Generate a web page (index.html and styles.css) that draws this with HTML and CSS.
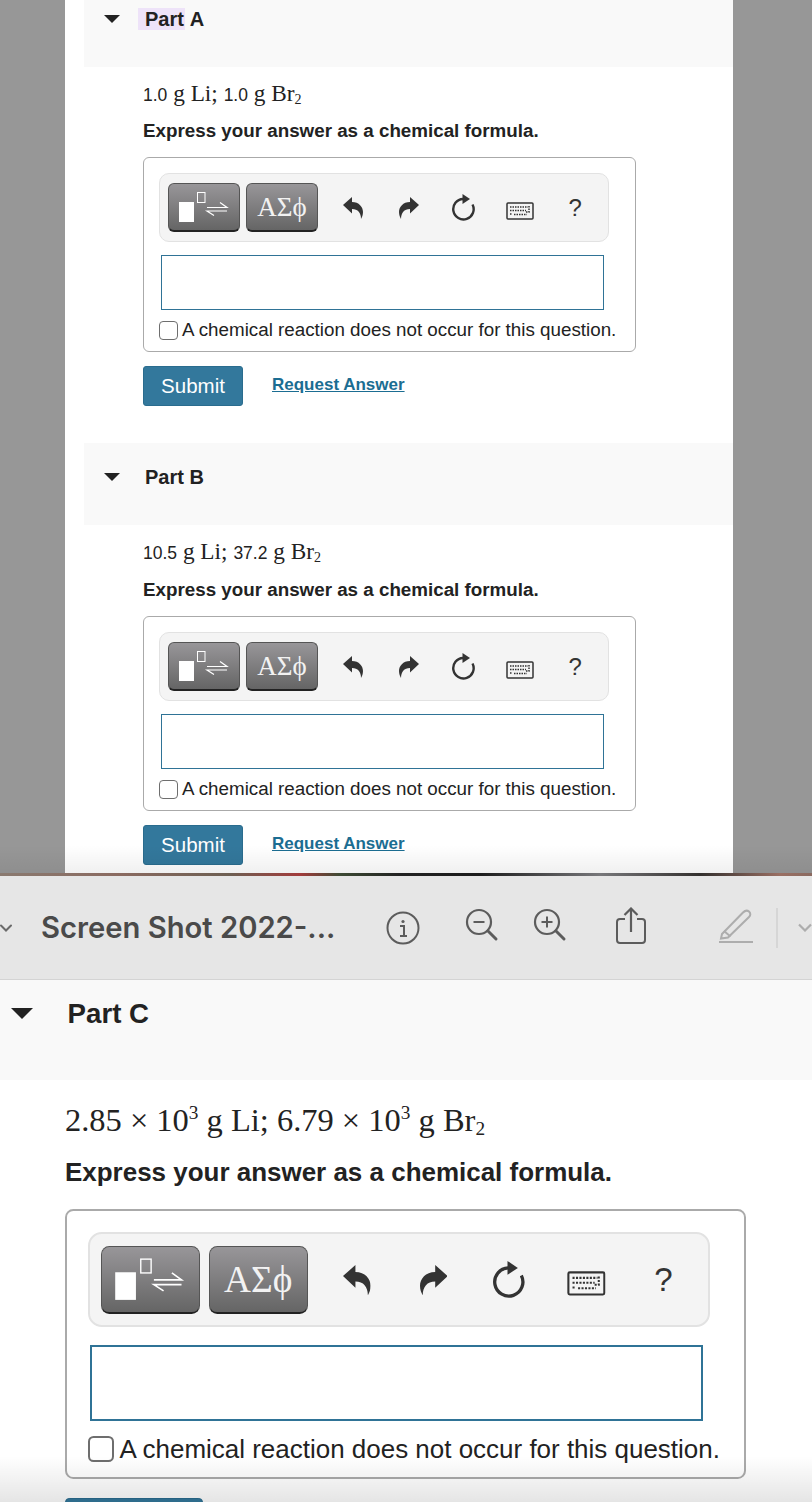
FILE: index.html
```html
<!DOCTYPE html>
<html lang="en">
<head>
  <meta charset="UTF-8">
  <title>Part A, B, C</title>
  <link rel="stylesheet" href="styles.css">
</head>
<body>
  <!-- shared toolbar icons -->
  <svg class="icon-defs" aria-hidden="true">
    <symbol id="i-template" viewBox="0 0 72 49">
      <rect x="11" y="19" width="15" height="20" fill="#fff"/>
      <rect x="29.5" y="9.5" width="7.5" height="10" fill="none" stroke="#fff"/>
      <path d="M39 24.500H59L52 19.500M59 28H39L46 32.500" fill="none" stroke="#fff" stroke-width="1.200"/>
    </symbol>
    <symbol id="i-undo" viewBox="0 0 20 22">
      <path d="M0 8 9 0V5C16 5 20 10 20 15 20 18 19 20 18 22 18 16 15 12 9 12V16.500Z" fill="#333"/>
    </symbol>
    <symbol id="i-redo" viewBox="0 0 20 22">
      <path d="M20 8 11 0V5C4 5 0 10 0 15 0 18 1 20 2 22 2 16 5 12 11 12V16.500Z" fill="#333"/>
    </symbol>
    <symbol id="i-reset" viewBox="0 0 24 27">
      <path d="M20.500 10.500A10.200 10.200 0 1 1 11 5" fill="none" stroke="#333" stroke-width="2.400"/>
      <path d="M10.500 0 18 5 10.500 10Z" fill="#333"/>
    </symbol>
    <symbol id="i-keys" viewBox="0 0 28 18">
      <rect x="1" y="1" width="26" height="16" rx="1" fill="none" stroke="#333" stroke-width="1.500"/>
      <path d="M4 5H22M4 8.500H20M4 12H6M8 12.500H21M23 4V10H20" fill="none" stroke="#333" stroke-width="1.500" stroke-dasharray="1.500 1"/>
    </symbol>
  </svg>

  <!-- first screenshot, parts A and B -->
  <div class="pane-top">
    <div class="sheet">
      <section class="part part-first">
        <div class="part-head">
          <span class="arrow"></span>
          <h2><span class="hilite">Part</span> A</h2>
        </div>
        <div class="part-body">
          <p class="amount"><span class="num">1.0</span> g Li; <span class="num">1.0</span> g Br<sub>2</sub></p>
          <p class="ask">Express your answer as a chemical formula.</p>
          <div class="answer">
            <div class="toolbar">
              <button class="tpl-btn"><svg><use href="#i-template"/></svg></button>
              <button class="tpl-btn greek">ΑΣϕ</button>
              <span class="tool"><svg class="ic-arrow"><use href="#i-undo"/></svg></span>
              <span class="tool"><svg class="ic-arrow"><use href="#i-redo"/></svg></span>
              <span class="tool"><svg class="ic-reset"><use href="#i-reset"/></svg></span>
              <span class="tool"><svg class="ic-keys"><use href="#i-keys"/></svg></span>
              <span class="tool help">?</span>
            </div>
            <div class="field"></div>
            <label class="noreact"><span class="check"></span>A chemical reaction does not occur for this question.</label>
          </div>
          <div class="actions">
            <button class="submit">Submit</button>
            <a class="request">Request Answer</a>
          </div>
        </div>
      </section>

      <section class="part">
        <div class="part-head">
          <span class="arrow"></span>
          <h2>Part B</h2>
        </div>
        <div class="part-body">
          <p class="amount"><span class="num">10.5</span> g Li; <span class="num">37.2</span> g Br<sub>2</sub></p>
          <p class="ask">Express your answer as a chemical formula.</p>
          <div class="answer">
            <div class="toolbar">
              <button class="tpl-btn"><svg><use href="#i-template"/></svg></button>
              <button class="tpl-btn greek">ΑΣϕ</button>
              <span class="tool"><svg class="ic-arrow"><use href="#i-undo"/></svg></span>
              <span class="tool"><svg class="ic-arrow"><use href="#i-redo"/></svg></span>
              <span class="tool"><svg class="ic-reset"><use href="#i-reset"/></svg></span>
              <span class="tool"><svg class="ic-keys"><use href="#i-keys"/></svg></span>
              <span class="tool help">?</span>
            </div>
            <div class="field"></div>
            <label class="noreact"><span class="check"></span>A chemical reaction does not occur for this question.</label>
          </div>
          <div class="actions">
            <button class="submit">Submit</button>
            <a class="request">Request Answer</a>
          </div>
        </div>
      </section>
    </div>
  </div>

  <div class="photo-strip"></div>

  <!-- preview window title bar -->
  <header class="viewer-bar">
    <svg class="bar-chevron" width="12" height="8" viewBox="0 0 12 8"><path d="M1 1.500 6 6.500 11 1.500" fill="none" stroke="#6a6a6a" stroke-width="2" stroke-linecap="round"/></svg>
    <div class="viewer-title">Screen Shot 2022-...</div>
    <svg class="bar-info" width="34" height="34" viewBox="0 0 34 34">
      <circle cx="17" cy="17" r="15.500" fill="none" stroke="#5c5c5c" stroke-width="2"/>
      <circle cx="17" cy="10.500" r="1.600" fill="#5c5c5c"/>
      <path d="M14 15H18V24M14 25H21" fill="none" stroke="#5c5c5c" stroke-width="2"/>
    </svg>
    <svg class="bar-zoomout" width="34" height="34" viewBox="0 0 34 34">
      <circle cx="14" cy="14" r="12" fill="none" stroke="#5c5c5c" stroke-width="2.200"/>
      <path d="M8.500 14H19.500" stroke="#5c5c5c" stroke-width="2"/>
      <path d="M23 23 31 31" stroke="#5c5c5c" stroke-width="3" stroke-linecap="round"/>
    </svg>
    <svg class="bar-zoomin" width="34" height="34" viewBox="0 0 34 34">
      <circle cx="14" cy="14" r="12" fill="none" stroke="#5c5c5c" stroke-width="2.200"/>
      <path d="M8.500 14H19.500M14 8.500V19.500" stroke="#5c5c5c" stroke-width="2"/>
      <path d="M23 23 31 31" stroke="#5c5c5c" stroke-width="3" stroke-linecap="round"/>
    </svg>
    <svg class="bar-share" width="30" height="38" viewBox="0 0 30 38">
      <path d="M9 12H4A3 3 0 0 0 1 15V33A3 3 0 0 0 4 36H26A3 3 0 0 0 29 33V15A3 3 0 0 0 26 12H21" fill="none" stroke="#5c5c5c" stroke-width="2"/>
      <path d="M15 25V2M8.500 8 15 1.500 21.500 8" fill="none" stroke="#5c5c5c" stroke-width="2.200"/>
    </svg>
    <svg class="bar-pencil" width="34" height="36" viewBox="0 0 34 36">
      <path d="M3 26 24 4.500C26 2.500 28 2 30 3.500 32 5.500 31.500 7.500 30 9L9 29.500 2 30.500Z" fill="none" stroke="#adadad" stroke-width="2"/>
      <path d="M5 23 11.500 28.500" stroke="#adadad" stroke-width="2"/>
      <path d="M0 34H34" stroke="#adadad" stroke-width="2"/>
    </svg>
    <span class="bar-divider"></span>
    <svg class="bar-chevron-r" width="14" height="9" viewBox="0 0 14 9"><path d="M1 1.500 7 7.500 13 1.500" fill="none" stroke="#adadad" stroke-width="2.200"/></svg>
  </header>

  <!-- second screenshot, part C, same page zoomed in -->
  <div class="pane-bottom">
    <div class="sheet-big">
      <section class="part">
        <div class="part-head">
          <span class="arrow"></span>
          <h2>Part C</h2>
        </div>
        <div class="part-body">
          <p class="amount serif">2.85 × 10<sup>3</sup> g Li; 6.79 × 10<sup>3</sup> g Br<sub>2</sub></p>
          <p class="ask">Express your answer as a chemical formula.</p>
          <div class="answer">
            <div class="toolbar">
              <button class="tpl-btn"><svg><use href="#i-template"/></svg></button>
              <button class="tpl-btn greek">ΑΣϕ</button>
              <span class="tool"><svg class="ic-arrow"><use href="#i-undo"/></svg></span>
              <span class="tool"><svg class="ic-arrow"><use href="#i-redo"/></svg></span>
              <span class="tool"><svg class="ic-reset"><use href="#i-reset"/></svg></span>
              <span class="tool"><svg class="ic-keys"><use href="#i-keys"/></svg></span>
              <span class="tool help">?</span>
            </div>
            <div class="field"></div>
            <label class="noreact"><span class="check"></span>A chemical reaction does not occur for this question.</label>
          </div>
          <div class="actions">
            <div class="submit"></div>
          </div>
        </div>
      </section>
    </div>
  </div>
</body>
</html>
```

FILE: styles.css
```css
body {
  margin: 0;
  padding: 0;
  width: 812px;
  height: 1502px;
  overflow: hidden;
  background-color: #fff;
  font-family: "Liberation Sans", Arial, sans-serif;
  color: #222;
}

.icon-defs {
  display: none;
}

/* panes */
.pane-top {
  position: relative;
  height: 873px;
  overflow: hidden;
  background-color: #979797;
}

.pane-top::after {
  content: "";
  position: absolute;
  left: 0;
  right: 0;
  bottom: 0;
  height: 28px;
  background: linear-gradient(rgba(0, 0, 0, 0), rgba(0, 0, 0, 0.06));
}

.sheet {
  margin-left: 65px;
  width: 649px;
  height: 900px;
  padding-left: 19px;
  background-color: #fff;
}

.photo-strip {
  height: 3px;
  background: linear-gradient(90deg, #8a7a70 0, #8a6a60 120px, #6d5f52 230px, #a23b3b 300px, #3d4a34 340px, #222 400px, #1c1c1c 480px, #77777a 600px, #33302e 700px, #9a6f63 780px, #8a6a60 812px);
}

.viewer-bar {
  position: relative;
  z-index: 1;
  display: flex;
  align-items: center;
  height: 103px;
  background-color: #e6e6e6;
  border-bottom: 1px solid #d4d4d4;
  box-sizing: content-box;
}

.viewer-title {
  margin-left: 29px;
  width: 345px;
  font-family: Inter, "Liberation Sans", sans-serif;
  font-size: 29.200px;
  font-weight: 600;
  color: #4a4a4a;
  white-space: nowrap;
}

.bar-zoomout { margin-left: 45px; margin-top: -6px; }
.bar-zoomin { margin-left: 34px; margin-top: -6px; }
.bar-share { margin-left: 49px; margin-top: -3px; }
.bar-pencil { margin-left: 73px; margin-top: -4px; }

.bar-divider {
  margin-left: 23px;
  width: 2px;
  height: 40px;
  background-color: #d6d6d6;
}

.bar-chevron-r { margin-left: 20px; }

.pane-bottom {
  position: relative;
  height: 522px;
  overflow: hidden;
}

.pane-bottom::after {
  content: "";
  position: absolute;
  left: 0;
  right: 0;
  bottom: 0;
  height: 46px;
  background: linear-gradient(rgba(0, 0, 0, 0), rgba(0, 0, 0, 0.1));
}

.sheet-big {
  zoom: 1.382;
  margin-left: -12px;
  margin-top: -9.500px;
  width: 610px;
}

/* question part */
.part {
  margin-bottom: 37px;
}

.part-first {
  margin-top: -15px;
}

.part-head {
  display: flex;
  align-items: flex-start;
  height: 82px;
  padding-left: 20px;
  background-color: #f9f9f9;
}

.arrow {
  width: 0;
  height: 0;
  margin-top: 30px;
  border-left: 8px solid transparent;
  border-right: 8px solid transparent;
  border-top: 8px solid #222;
}

.part-head h2 {
  margin: 23px 0 0 25px;
  font-size: 20px;
  line-height: 22px;
  font-weight: bold;
  color: #222;
}

.hilite {
  margin-left: -7px;
  padding: 0 1px 0 7px;
  background-color: #eee3f9;
}

.part-body {
  padding-left: 59px;
}

.amount {
  margin: 0;
  padding-top: 14px;
  font-family: "Liberation Serif", serif;
  font-size: 23.300px;
  line-height: 24px;
  color: #222;
}

.part + .part .amount {
  padding-bottom: 1px;
}

.amount.serif {
  padding-top: 17px;
  padding-bottom: 2.500px;
  font-size: 23.500px;
}

.amount .num {
  font-family: "Liberation Sans", sans-serif;
  font-size: 17.500px;
}

.amount sub {
  font-size: 14px;
  line-height: 0;
  vertical-align: -3px;
}

.amount sup {
  font-size: 14px;
  line-height: 0;
}

.ask {
  margin: 13px 0 16px;
  font-size: 18.800px;
  line-height: 21px;
  font-weight: bold;
  color: #222;
}

/* answer box */
.answer {
  box-sizing: border-box;
  width: 493px;
  height: 195px;
  padding: 15px 15px 0;
  background-color: #fff;
  border: 1.500px solid #aaa;
  border-radius: 6px;
}

.toolbar {
  display: flex;
  align-items: center;
  box-sizing: border-box;
  width: 450px;
  height: 69px;
  padding-left: 8px;
  background-color: #f4f4f4;
  border: 1.500px solid #e2e2e2;
  border-radius: 10px;
}

.tpl-btn {
  box-sizing: border-box;
  width: 72px;
  height: 49px;
  margin: 0 6px 0 0;
  padding: 0;
  background: linear-gradient(#989699, #656565);
  border: 1px solid #555;
  border-bottom: 2px solid #222;
  border-radius: 6px;
}

.tpl-btn svg {
  display: block;
  width: 72px;
  height: 49px;
  margin: -1px;
}

.greek {
  font-family: "Liberation Serif", serif;
  font-size: 27px;
  color: #f2f2f2;
}

.tool {
  display: flex;
  justify-content: center;
  align-items: center;
  width: 55.500px;
  height: 49px;
}

.tpl-btn + .tool {
  margin-left: 1.500px;
}

.ic-arrow { width: 20px; height: 22px; }
.ic-reset { width: 24px; height: 27px; }
.ic-keys { width: 28px; height: 18px; margin-top: 6px; }

.help {
  font-size: 24px;
  color: #333;
}

.field {
  box-sizing: border-box;
  width: 443px;
  height: 55px;
  margin: 13px 0 0 2px;
  background-color: #fff;
  border: 1.500px solid #2f7396;
}

.noreact {
  display: flex;
  align-items: center;
  margin-top: 9px;
  font-size: 18.800px;
  line-height: 22px;
  color: #222;
  white-space: nowrap;
}

.check {
  box-sizing: border-box;
  width: 19px;
  height: 19px;
  margin-right: 4px;
  background-color: #fff;
  border: 1.500px solid #6e6e6e;
  border-radius: 4px;
}

/* buttons under the box */
.actions {
  display: flex;
  align-items: center;
  margin-top: 14px;
}

.submit {
  box-sizing: border-box;
  width: 100px;
  height: 40px;
  padding: 0;
  background-color: #33789c;
  border: 1px solid #2a6c8e;
  border-radius: 3px;
  color: #fff;
  font-family: "Liberation Sans", sans-serif;
  font-size: 20.500px;
}

.request {
  margin-left: 29px;
  margin-top: -2px;
  font-size: 17px;
  font-weight: bold;
  color: #1b6d92;
  text-decoration: underline;
}
```
